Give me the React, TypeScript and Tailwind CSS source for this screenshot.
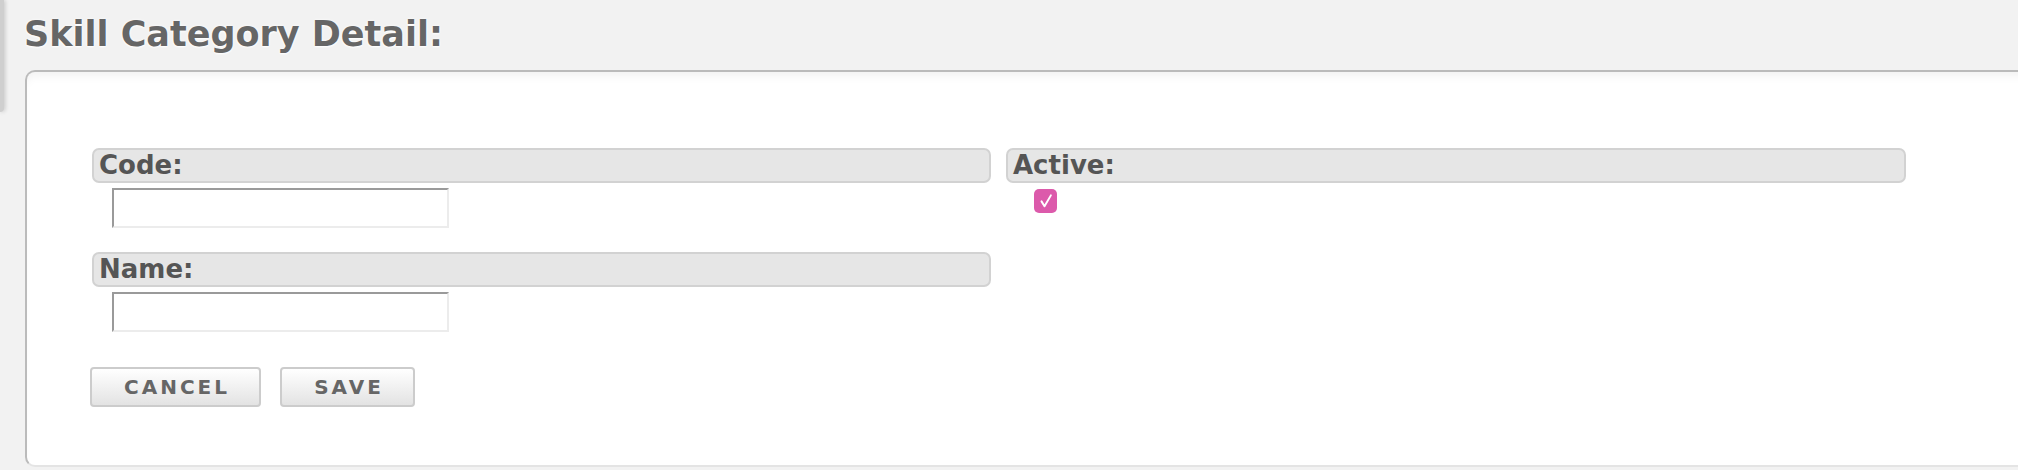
function FieldLabel({ text }: { text: string }) {
  return (
    <div className="h-[35px] rounded-[7px] border-2 border-[#d2d2d2] bg-[#e6e6e6] pl-[5px] text-[26px] leading-[30px] font-bold text-[#555]">
      {text}
    </div>
  )
}

function TextBox() {
  return (
    <input
      type="text"
      className="ml-[20px] mt-[5px] block h-[40px] w-[337px] border-2 border-t-[#9a9a9a] border-l-[#9a9a9a] border-r-[#ececec] border-b-[#ececec] bg-white outline-none"
    />
  )
}

function Button({ label, width }: { label: string; width: string }) {
  return (
    <button
      type="button"
      className={`h-[40px] ${width} rounded-[4px] border-2 border-[#cccccc] bg-gradient-to-b from-white to-[#e3e3e3] text-[20px] font-bold tracking-[3px] text-[#666] pl-[3px]`}
    >
      {label}
    </button>
  )
}

export default function App() {
  return (
    <div className="relative h-[470px] w-full overflow-hidden bg-[#f2f2f2] font-['DejaVu_Sans',sans-serif]">
      <div className="absolute left-0 top-0 h-[112px] w-[4px] rounded-br-[4px] bg-[#cfcfcf] shadow-[1px_0_4px_rgba(0,0,0,0.2)]" />

      <h1 className="pl-[24px] pt-[14px] text-[35px] leading-[41px] font-bold text-[#666] [text-shadow:0_1px_2px_#fff,0_0_3px_#fff]">
        Skill Category Detail:
      </h1>

      <section className="ml-[25px] mr-[-20px] mt-[15px] h-[397px] rounded-[10px] border-2 border-[#bbbbbb] border-b-[#e4e4e4] bg-white pl-[65px] pt-[76px] shadow-[inset_0_8px_10px_-4px_rgba(0,0,0,0.05)]">
        <div className="grid grid-cols-[899px_900px] gap-x-[15px]">
          <div>
            <FieldLabel text="Code:" />
            <TextBox />
            <div className="mt-[24px]">
              <FieldLabel text="Name:" />
              <TextBox />
            </div>
            <div className="ml-[-2px] mt-[35px] flex gap-[19px]">
              <Button label="CANCEL" width="w-[171px]" />
              <Button label="SAVE" width="w-[135px]" />
            </div>
          </div>

          <div>
            <FieldLabel text="Active:" />
            <div className="ml-[28px] mt-[6px] flex h-[24px] w-[23px] items-center justify-center rounded-[5px] bg-[#dc5aab]">
              <svg viewBox="0 0 24 24" className="h-[18px] w-[18px]" fill="none" stroke="#fff" strokeWidth={2.6} strokeLinecap="round" strokeLinejoin="round">
                <path d="M6 12.5l4 6.5L18.5 4.5" />
              </svg>
            </div>
          </div>
        </div>
      </section>
    </div>
  )
}
